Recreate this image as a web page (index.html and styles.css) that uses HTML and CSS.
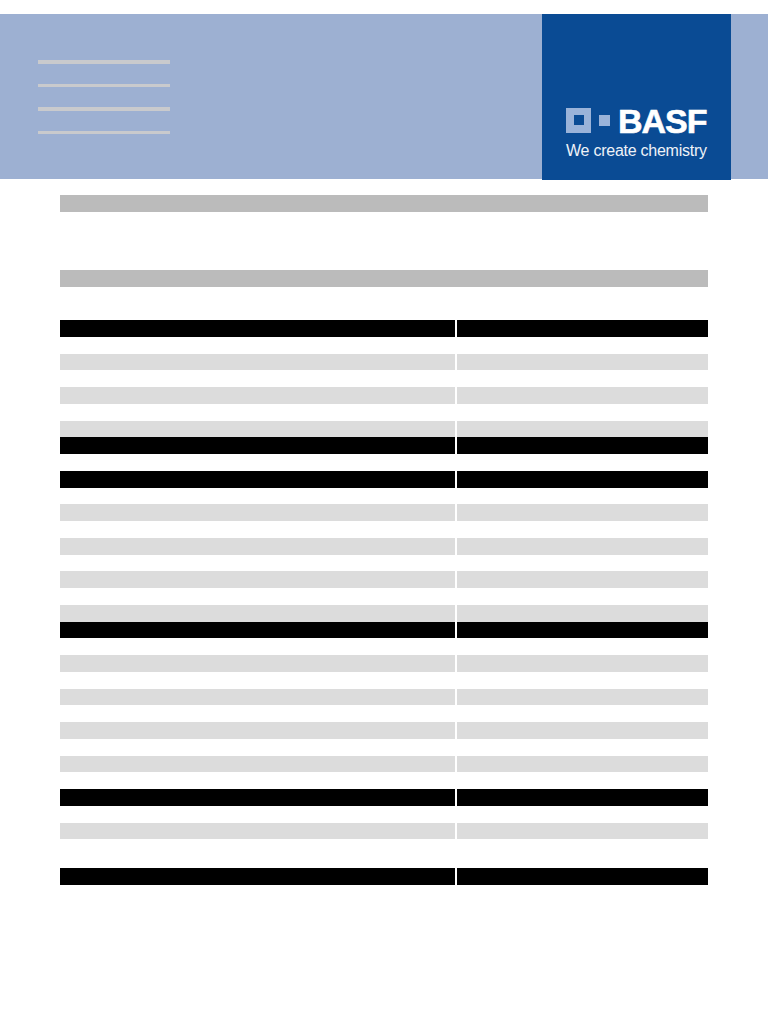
FILE: index.html
```html
<!DOCTYPE html>
<html lang="en">
<head>
<meta charset="utf-8">
<title>BASF</title>
<link rel="stylesheet" href="styles.css">
</head>
<body>
<div class="top-gap"></div>
<header class="header">
  <nav class="menu">
    <span class="menu-line"></span>
    <span class="menu-line"></span>
    <span class="menu-line"></span>
    <span class="menu-line"></span>
  </nav>
  <div class="logo-box">
    <div class="logo-mark">
      <span class="sq-big"><span class="sq-hole"></span></span>
      <span class="sq-small"></span>
      <span class="logo-word">BASF</span>
    </div>
    <div class="tagline">We create chemistry</div>
  </div>
</header>
<main class="content">
  <div class="bar bar-first"></div>
  <div class="bar bar-second"></div>
  <div class="table">
    <div class="row dark"><span class="cell"></span><span class="cell"></span></div>
    <div class="row blank"></div>
    <div class="row light"><span class="cell"></span><span class="cell"></span></div>
    <div class="row blank"></div>
    <div class="row light"><span class="cell"></span><span class="cell"></span></div>
    <div class="row blank"></div>
    <div class="row light"><span class="cell"></span><span class="cell"></span></div>
    <div class="row dark"><span class="cell"></span><span class="cell"></span></div>
    <div class="row blank"></div>
    <div class="row dark"><span class="cell"></span><span class="cell"></span></div>
    <div class="row blank"></div>
    <div class="row light"><span class="cell"></span><span class="cell"></span></div>
    <div class="row blank"></div>
    <div class="row light"><span class="cell"></span><span class="cell"></span></div>
    <div class="row blank"></div>
    <div class="row light"><span class="cell"></span><span class="cell"></span></div>
    <div class="row blank"></div>
    <div class="row light"><span class="cell"></span><span class="cell"></span></div>
    <div class="row dark"><span class="cell"></span><span class="cell"></span></div>
    <div class="row blank"></div>
    <div class="row light"><span class="cell"></span><span class="cell"></span></div>
    <div class="row blank"></div>
    <div class="row light"><span class="cell"></span><span class="cell"></span></div>
    <div class="row blank"></div>
    <div class="row light"><span class="cell"></span><span class="cell"></span></div>
    <div class="row blank"></div>
    <div class="row light"><span class="cell"></span><span class="cell"></span></div>
    <div class="row blank"></div>
    <div class="row dark"><span class="cell"></span><span class="cell"></span></div>
    <div class="row blank"></div>
    <div class="row light"><span class="cell"></span><span class="cell"></span></div>
    <div class="row spacer"></div>
    <div class="row dark"><span class="cell"></span><span class="cell"></span></div>
  </div>
</main>
</body>
</html>
```

FILE: styles.css
```css
html, body {
  margin: 0;
  padding: 0;
  background: #ffffff;
  font-family: "Liberation Sans", Arial, sans-serif;
}

.top-gap {
  height: 14px;
}

.header {
  height: 165px;
  background: #9db0d2;
  display: flex;
  align-items: flex-start;
}

.menu {
  display: flex;
  flex-direction: column;
  gap: 20px;
  padding: 46px 0 0 38px;
}

.menu-line {
  display: block;
  width: 132px;
  height: 3.5px;
  background: #c9cacd;
}

.logo-box {
  margin-left: auto;
  margin-right: 37px;
  width: 189px;
  height: 166px;
  background: #0a4b94;
  box-sizing: border-box;
  padding: 93px 0 0 24px;
  display: flex;
  flex-direction: column;
}

.logo-mark {
  display: flex;
  align-items: center;
  height: 26px;
}

.sq-big {
  width: 25px;
  height: 25px;
  background: #9ab3d9;
  display: flex;
  align-items: center;
  justify-content: center;
}

.sq-hole {
  width: 10px;
  height: 10px;
  background: #0a4b94;
}

.sq-small {
  width: 11px;
  height: 11px;
  background: #9ab3d9;
  margin-left: 8px;
}

.logo-word {
  margin-left: 8px;
  color: #ffffff;
  font-weight: bold;
  font-size: 34px;
  line-height: 26px;
  letter-spacing: -1px;
  -webkit-text-stroke: 0.6px #ffffff;
  padding-top: 1px;
}

.tagline {
  margin-top: 9px;
  color: #eef2f8;
  font-size: 16px;
  line-height: 18px;
  letter-spacing: -0.25px;
  white-space: nowrap;
}

.content {
  padding: 16px 60px 0 60px;
}

.bar {
  height: 17px;
  background: #bbbbbb;
}

.bar-second {
  margin-top: 58px;
}

.table {
  margin-top: 33px;
  display: flex;
  flex-direction: column;
}

.row {
  height: 16.75px;
  display: grid;
  grid-template-columns: 395.3px 1fr;
  column-gap: 1.4px;
}

.row.spacer {
  height: 29px;
}

.row.dark .cell {
  background: #000000;
}

.row.light .cell {
  background: #dcdcdc;
}
```
